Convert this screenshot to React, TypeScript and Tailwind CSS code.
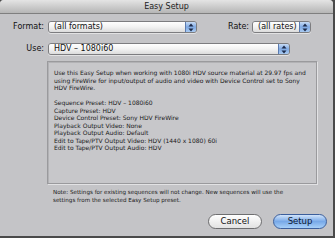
import React from 'react'

const font = { fontFamily: '"DejaVu Sans", "Liberation Sans", sans-serif' }

function Arrows() {
    return (
        <svg width="6" height="9" viewBox="0 0 6 9">
            <path d="M3 0.5 L5.5 3.5 L0.5 3.5 Z" fill="#1c2a4a" />
            <path d="M3 8.5 L5.5 5.5 L0.5 5.5 Z" fill="#1c2a4a" />
        </svg>
    )
}

function Popup({ label, width }: { label: string; width: string }) {
    return (
        <div className={`${width} h-[12px] flex rounded-[3px] border border-[#7d7d80] overflow-hidden shadow-[0_1px_0_rgba(255,255,255,0.5)]`}>
            <div className="flex-1 flex items-center pl-[5px] bg-gradient-to-b from-white via-[#f2f2f2] to-[#dcdcdc] text-[8px] text-[#111] leading-none">
                {label}
            </div>
            <div className="w-[11px] flex items-center justify-center border-l border-[#5b7bb0] bg-gradient-to-b from-[#c8dcf5] via-[#7fa9e3] to-[#a9cbf2]">
                <Arrows />
            </div>
        </div>
    )
}

const lines = [
    'Use this Easy Setup when working with 1080i HDV source material at 29.97 fps and',
    'using FireWire for input/output of audio and video with Device Control set to Sony',
    'HDV FireWire.',
    '',
    'Sequence Preset: HDV – 1080i60',
    'Capture Preset: HDV',
    'Device Control Preset: Sony HDV FireWire',
    'Playback Output Video: None',
    'Playback Output Audio: Default',
    'Edit to Tape/PTV Output Video: HDV (1440 x 1080) 60i',
    'Edit to Tape/PTV Output Audio: HDV',
]

export default function App() {
    return (
        <div className="w-[335px] h-[238px] bg-[#4a4a4a]" style={font}>
            <div className="w-[333px] h-[236px] bg-[#c4c4c7] rounded-t-[4px] overflow-hidden flex flex-col">
                {/* Title bar */}
                <div className="h-[14px] shrink-0 flex items-center justify-center bg-gradient-to-b from-[#e4e4e4] to-[#b6b6b6] border-b border-[#7f7f7f] text-[8px] text-[#222] leading-none">
                    Easy Setup
                </div>

                {/* Format / Rate */}
                <div className="mt-[7px] flex items-center h-[12px]">
                    <span className="w-[44px] text-right text-[8px] text-[#111] leading-none">Format:</span>
                    <div className="ml-[4px]">
                        <Popup label="(all formats)" width="w-[149px]" />
                    </div>
                    <span className="ml-[31px] text-[8px] text-[#111] leading-none">Rate:</span>
                    <div className="ml-[3px]">
                        <Popup label="(all rates)" width="w-[59px]" />
                    </div>
                </div>

                {/* Use */}
                <div className="mt-[10px] flex items-center h-[12px]">
                    <span className="w-[44px] text-right text-[8px] text-[#111] leading-none">Use:</span>
                    <div className="ml-[4px]">
                        <Popup label="HDV – 1080i60" width="w-[242px]" />
                    </div>
                </div>

                {/* Description box */}
                <div className="mt-[6px] ml-[47px] w-[270px] h-[123px] border border-[#9a9a9d] shadow-[inset_1px_1px_0_#b2b2b5,1px_1px_0_#e2e2e4] bg-[#c7c7ca] pt-[7px] pl-[6px] text-[6px] leading-[7.5px] text-[#1a1a1a]">
                    {lines.map((l, i) => (
                        <div key={i} className="h-[7.5px] whitespace-nowrap">{l}</div>
                    ))}
                </div>

                {/* Note */}
                <div className="mt-[4px] pl-[53px] text-[5.6px] leading-[8px] text-[#1a1a1a]">
                    <div className="whitespace-nowrap">Note: Settings for existing sequences will not change. New sequences will use the</div>
                    <div className="whitespace-nowrap">settings from the selected Easy Setup preset.</div>
                </div>

                {/* Buttons */}
                <div className="mt-[10px] flex pl-[208px] gap-[11px]">
                    <button className="w-[54px] h-[15px] rounded-full border border-[#6e6e70] bg-gradient-to-b from-white via-[#f0f0f0] to-[#e2e2e2] text-[8.5px] text-[#111] leading-none">
                        Cancel
                    </button>
                    <button className="w-[54px] h-[15px] rounded-full border border-[#3c5f9c] bg-gradient-to-b from-[#d2e4fa] via-[#78a9e8] to-[#a8d0f8] text-[8.5px] text-[#0d1830] leading-none">
                        Setup
                    </button>
                </div>
            </div>
        </div>
    )
}
